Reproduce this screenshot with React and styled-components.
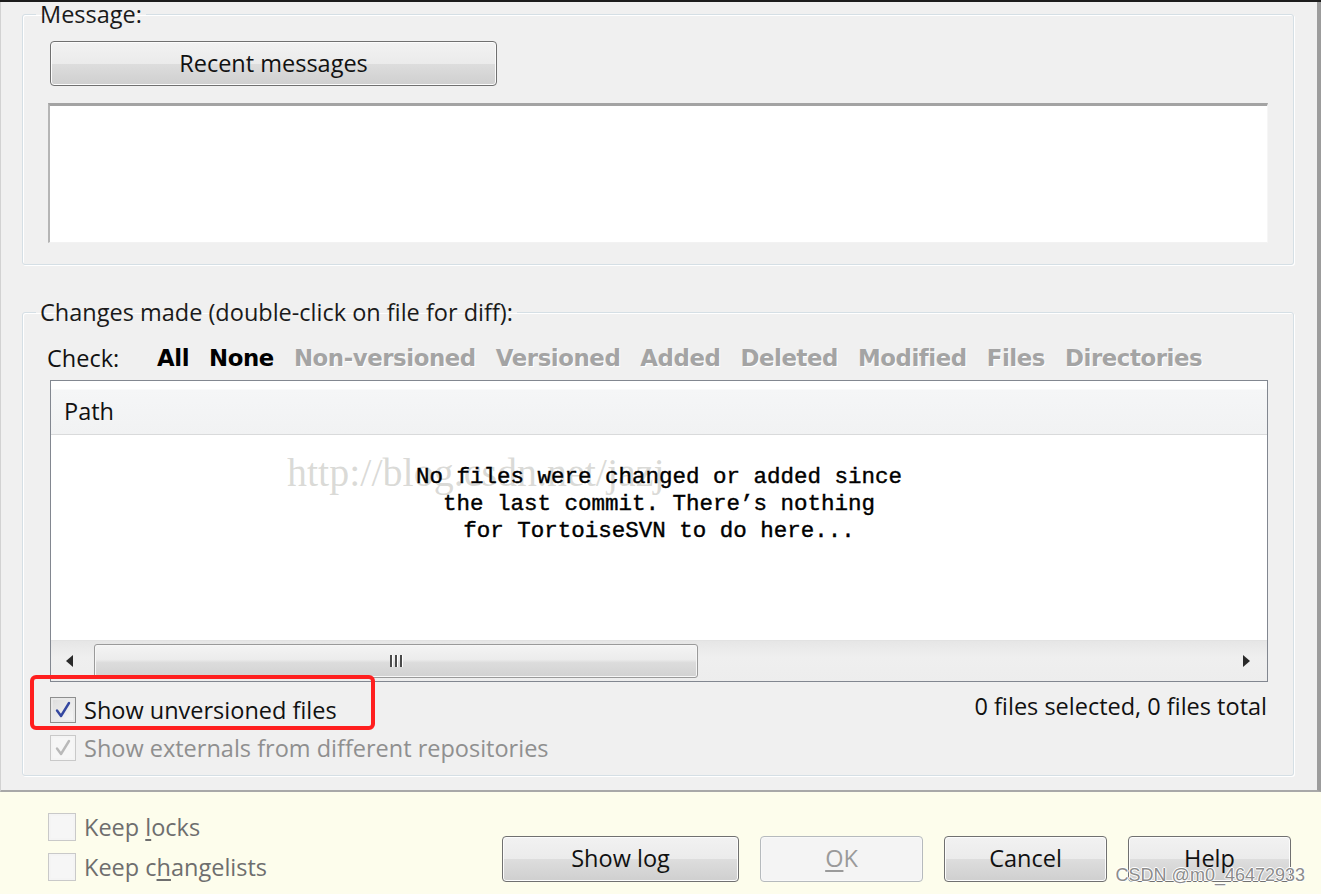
import React from 'react';
import styled, { createGlobalStyle } from 'styled-components';

const Global = createGlobalStyle`
  html, body { margin: 0; padding: 0; background: #fdfdec; }
  body { font-family: "Open Sans", "Noto Sans", sans-serif; color: #111; }
  * { box-sizing: border-box; }
`;

const Window = styled.div`
  position: relative;
  width: 1321px;
  height: 894px;
  overflow: hidden;
  display: flex;
  flex-direction: column;
  background: #fdfdec;
  border-top: 2px solid #1c1c1c;
  font-size: 23.5px;
`;

const Panel = styled.div`
  display: flex;
  flex-direction: column;
  height: 790px;
  flex: none;
  background: #f0f0f0;
  border-left: 1px solid #d2d2d2;
  border-right: 4px solid #9c9c9c;
  border-bottom: 2px solid #a8a8a8;
  padding: 0 23px 0 21px;
`;

const Group = styled.fieldset`
  margin: ${p => p.$top || 0}px 0 0 0;
  padding: ${p => p.$pad};
  border: 1px solid #d5dfe5;
  border-radius: 3px;
  box-shadow: inset 1px 1px 0 #fff, 1px 1px 0 #fff;
  min-width: 0;
`;

const Legend = styled.legend`
  margin-left: -14px;
  padding: 0 4px;
  line-height: 24px;
  font-size: 23.5px;
  color: #1a1a1a;
`;

const Button = styled.button`
  display: flex;
  align-items: center;
  justify-content: center;
  width: ${p => p.$w}px;
  height: ${p => p.$h || 46}px;
  padding: 0 0 2px;
  font-family: "Open Sans", "Noto Sans", sans-serif;
  font-size: 23.5px;
  color: ${p => (p.disabled ? '#9a9a9a' : '#111')};
  border: 1px solid ${p => (p.disabled ? '#b6babd' : '#707070')};
  border-radius: 4px;
  box-shadow: inset 0 0 0 1px ${p => (p.disabled ? '#f8f8f8' : '#fcfcfc')};
  background: ${p =>
    p.disabled
      ? '#f4f4f4'
      : 'linear-gradient(#f2f2f2 0%, #ebebeb 50%, #dddddd 51%, #cfcfcf 100%)'};
`;

const MessageBox = styled.div`
  margin: 17px 0 0 -2px;
  height: 140px;
  background: #fff;
  border-top: 3px solid #a3a3a3;
  border-left: 2px solid #b5b5b5;
  border-right: 1px solid #f6f6f6;
  border-bottom: 1px solid #f2f2f2;
`;

const CheckRow = styled.div`
  display: flex;
  align-items: center;
  height: 28px;
  margin-left: -3px;
  white-space: nowrap;
`;

const CheckLabel = styled.span`
  width: 110px;
  font-size: 23.5px;
`;

const Filters = styled.div`
  display: flex;
  gap: 20px;
`;

const Filter = styled.span`
  font-family: "DejaVu Sans", "Liberation Sans", sans-serif;
  font-weight: bold;
  font-size: 22.8px;
  letter-spacing: -0.4px;
  color: ${p => (p.$on ? '#000' : '#a4a4a4')};
  text-shadow: ${p => (p.$on ? 'none' : '1px 1px 0 #fff')};
`;

const ListBox = styled.div`
  margin-top: 8px;
  height: 302px;
  border: 1px solid #828790;
  background: #fff;
  display: flex;
  flex-direction: column;
`;

const ListHeader = styled.div`
  height: 54px;
  flex: none;
  display: flex;
  align-items: center;
  padding: 6px 0 0 13px;
  background: linear-gradient(#fff 0, #fff 8px, #f5f6f7 9px, #f1f2f3 100%);
  border-bottom: 1px solid #d9dadb;
  font-size: 23.5px;
`;

const ListBody = styled.div`
  position: relative;
  flex: 1;
  padding-top: 29px;
  text-align: center;
  overflow: hidden;
`;

const EmptyText = styled.div`
  position: relative;
  font-family: "Liberation Mono", "DejaVu Sans Mono", monospace;
  font-size: 22.5px;
  line-height: 27px;
  color: #000;
  white-space: pre;
  -webkit-text-stroke: 0.4px #000;
`;

const Watermark = styled.div`
  position: absolute;
  left: 236px;
  top: 14px;
  font-family: "Liberation Serif", serif;
  font-size: 40px;
  color: rgba(150, 150, 140, 0.35);
  white-space: nowrap;
`;

const HScroll = styled.div`
  height: 41px;
  flex: none;
  display: flex;
  align-items: center;
  padding: 0 17px 0 15px;
  background: linear-gradient(#e6e6e6, #efefef 40%, #ededed);
  border-top: 1px solid #e2e2e2;
`;

const Arrow = styled.svg`
  width: 8px;
  height: 12px;
  flex: none;
`;

const Track = styled.div`
  flex: 1;
  display: flex;
  align-items: center;
  height: 100%;
  padding: 0 22px 0 20px;
`;

const Thumb = styled.div`
  width: 604px;
  height: 34px;
  display: flex;
  align-items: center;
  justify-content: center;
  border: 1px solid #9a9a9a;
  border-radius: 3px;
  box-shadow: inset 0 0 0 1px #f7f7f7;
  background: linear-gradient(#f4f4f4 0%, #ececec 45%, #dcdcdc 55%, #d2d2d2 100%);
`;

const Grip = styled.div`
  display: flex;
  gap: 3px;
  span {
    width: 2px;
    height: 12px;
    background: #4a4a4a;
    box-shadow: 1px 0 0 #fff;
  }
`;

const StatusRow = styled.div`
  display: flex;
  justify-content: space-between;
  align-items: flex-start;
  margin-top: 13px;
`;

const Count = styled.span`
  line-height: 22px;
  font-size: 23.5px;
  margin-right: 1px;
`;

const Option = styled.label`
  position: relative;
  display: flex;
  align-items: center;
  gap: 8px;
  height: 30px;
  margin-top: ${p => p.$top || 0}px;
  font-size: 23.5px;
  color: ${p => p.$color || '#111'};
  white-space: nowrap;
`;

const Box = styled.span`
  width: ${p => p.$size || 26}px;
  height: ${p => p.$size || 26}px;
  flex: none;
  display: flex;
  align-items: center;
  justify-content: center;
  border: 1px solid ${p => (p.$dim ? '#c9c9c9' : '#8e8f8f')};
  box-shadow: inset 0 0 0 2px ${p => (p.$dim ? '#f4f4f4' : '#e9e9e9')};
  background: ${p => (p.$dim ? '#f6f6f6' : 'linear-gradient(135deg, #dcdcdc, #f8f8f8)')};
`;

const Highlight = styled.span`
  position: absolute;
  left: -20px;
  top: -20px;
  width: 345px;
  height: 55px;
  border: 4px solid #ff1f1f;
  border-radius: 6px;
  pointer-events: none;
`;

const Footer = styled.div`
  flex: 1;
  display: flex;
  align-items: flex-end;
  padding: 19px 30px 12px 48px;
`;

const FooterOptions = styled.div`
  display: flex;
  flex-direction: column;
  gap: 10px;
`;

const ButtonRow = styled.div`
  margin-left: auto;
  display: flex;
  gap: 21px;
`;

const Key = styled.u`
  text-underline-offset: 3px;
`;

const Credit = styled.div`
  position: absolute;
  right: 16px;
  bottom: 8px;
  font-family: "Liberation Sans", Arial, sans-serif;
  font-size: 18px;
  color: #8c8c8c;
  text-shadow: 1px 0 0 #fff, -1px 0 0 #fff, 0 1px 0 #fff, 0 -1px 0 #fff;
`;

function Tick({ color }) {
  return (
    <svg width="20" height="20" viewBox="0 0 20 20">
      <path d="M4 10.5 L8 16 L16 3" fill="none" stroke={color} strokeWidth="2.4" strokeLinecap="round" strokeLinejoin="round" />
    </svg>
  );
}

const filters = ['Non-versioned', 'Versioned', 'Added', 'Deleted', 'Modified', 'Files', 'Directories'];

export default function App() {
  return (
    <Window>
      <Global />
      <Panel>
        <Group $pad="15px 25px 21px 27px">
          <Legend>Message:</Legend>
          <Button $w={447} $h={45}>Recent messages</Button>
          <MessageBox />
        </Group>

        <Group $top={35} $pad="20px 25px 12px 27px">
          <Legend>Changes made (double-click on file for diff):</Legend>
          <CheckRow>
            <CheckLabel>Check:</CheckLabel>
            <Filters>
              <Filter $on>All</Filter>
              <Filter $on>None</Filter>
              {filters.map(f => (
                <Filter key={f}>{f}</Filter>
              ))}
            </Filters>
          </CheckRow>

          <ListBox>
            <ListHeader>Path</ListHeader>
            <ListBody>
              <Watermark>http://blog.csdn.net/jazj</Watermark>
              <EmptyText>{'No files were changed or added since\nthe last commit. There\u2019s nothing\nfor TortoiseSVN to do here...'}</EmptyText>
            </ListBody>
            <HScroll>
              <Arrow viewBox="0 0 8 12"><path d="M7 0 L0 6 L7 12 Z" fill="#2a2a2a" /></Arrow>
              <Track>
                <Thumb>
                  <Grip><span /><span /><span /></Grip>
                </Thumb>
              </Track>
              <Arrow viewBox="0 0 8 12"><path d="M1 0 L8 6 L1 12 Z" fill="#2a2a2a" /></Arrow>
            </HScroll>
          </ListBox>

          <StatusRow>
            <Option>
              <Highlight />
              <Box><Tick color="#3447a0" /></Box>
              <span>Show unversioned files</span>
            </Option>
            <Count>0 files selected, 0 files total</Count>
          </StatusRow>
          <Option $top={8} $color="#8f8f8f">
            <Box $dim><Tick color="#b9b9b9" /></Box>
            <span>Show externals from different repositories</span>
          </Option>
        </Group>
      </Panel>

      <Footer>
        <FooterOptions>
          <Option $color="#6e6e6e">
            <Box $dim $size={28} />
            <span>Keep <Key>l</Key>ocks</span>
          </Option>
          <Option $color="#6e6e6e">
            <Box $dim $size={28} />
            <span>Keep c<Key>h</Key>angelists</span>
          </Option>
        </FooterOptions>
        <ButtonRow>
          <Button $w={237}><span>Show lo<Key>g</Key></span></Button>
          <Button $w={163} disabled><span><Key>O</Key>K</span></Button>
          <Button $w={163}>Cancel</Button>
          <Button $w={163}>Help</Button>
        </ButtonRow>
      </Footer>
      <Credit>CSDN @m0_46472933</Credit>
    </Window>
  );
}
